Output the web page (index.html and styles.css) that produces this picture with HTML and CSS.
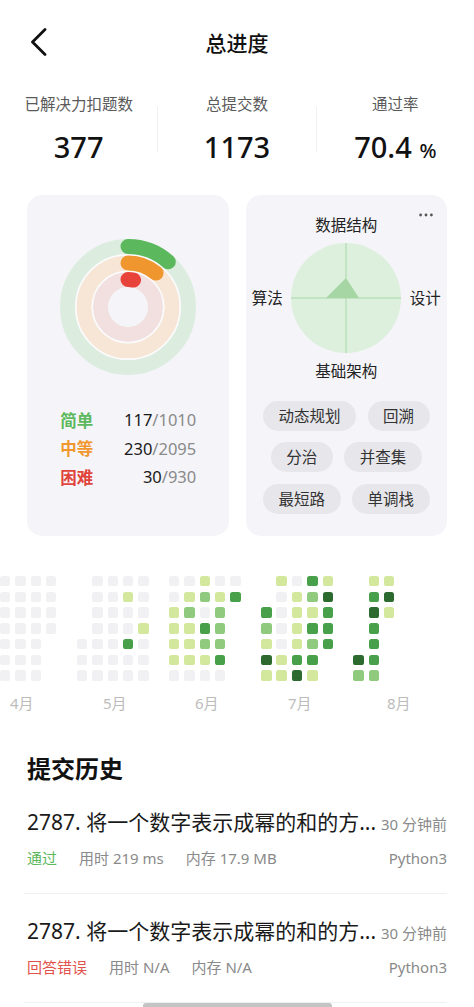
FILE: index.html
```html
<!DOCTYPE html>
<html lang="zh-CN">
<head>
<meta charset="utf-8">
<title>总进度</title>
<link rel="stylesheet" href="styles.css">
</head>
<body>
<div class="page">
  <header class="topbar">
    <div class="back">
      <svg width="20" height="28" viewBox="0 0 20 28"><path d="M16 1.5 L3.5 14 L16 26.5" fill="none" stroke="#111" stroke-width="2.8" stroke-linecap="round" stroke-linejoin="round"/></svg>
    </div>
    <h1 class="title">总进度</h1>
    <div></div>
  </header>

  <section class="stats">
    <div class="stat"><div class="stat-label">已解决力扣题数</div><div class="stat-value">377</div></div>
    <div class="vdiv"></div>
    <div class="stat"><div class="stat-label">总提交数</div><div class="stat-value">1173</div></div>
    <div class="vdiv"></div>
    <div class="stat"><div class="stat-label">通过率</div><div class="stat-value">70.4 <span class="pct">%</span></div></div>
  </section>

  <section class="cards">
    <div class="card card-rings">
      <svg class="rings" width="140" height="140" viewBox="0 0 140 140">
        <circle cx="70" cy="70" r="60.5" fill="none" stroke="#dcede0" stroke-width="15"/>
        <circle cx="70" cy="70" r="44" fill="none" stroke="#f7e6d6" stroke-width="15"/>
        <circle cx="70" cy="70" r="27.5" fill="none" stroke="#f2dfe0" stroke-width="15"/>
        <circle cx="70" cy="70" r="52.25" fill="none" stroke="#fbfbfc" stroke-width="1.5"/>
        <circle cx="70" cy="70" r="35.75" fill="none" stroke="#fbfbfc" stroke-width="1.5"/>
        <g transform="rotate(-90 70 70)">
          <circle cx="70" cy="70" r="60.5" fill="none" stroke="#5cb85c" stroke-width="15" stroke-linecap="round" stroke-dasharray="44 400"/>
          <circle cx="70" cy="70" r="44" fill="none" stroke="#f0962e" stroke-width="15" stroke-linecap="round" stroke-dasharray="30.4 400"/>
          <circle cx="70" cy="70" r="27.5" fill="none" stroke="#e8433a" stroke-width="15" stroke-linecap="round" stroke-dasharray="5.6 400"/>
        </g>
      </svg>
      <div class="legend">
        <span class="lv easy">简单</span><span class="cnt"><b>117</b>/1010</span>
        <span class="lv medium">中等</span><span class="cnt"><b>230</b>/2095</span>
        <span class="lv hard">困难</span><span class="cnt"><b>30</b>/930</span>
      </div>
    </div>

    <div class="card card-skills">
      <button class="more" aria-label="更多">
        <svg width="14" height="4" viewBox="0 0 14 4"><circle cx="1.6" cy="2" r="1.4" fill="#555"/><circle cx="7" cy="2" r="1.4" fill="#555"/><circle cx="12.4" cy="2" r="1.4" fill="#555"/></svg>
      </button>
      <div class="axis axis-top">数据结构</div>
      <div class="radar-row">
        <span class="axis">算法</span>
        <svg class="radar" width="110" height="110" viewBox="0 0 110 110">
          <circle cx="55" cy="55" r="55" fill="#ddf0dd"/>
          <line x1="55" y1="0" x2="55" y2="110" stroke="#a9d8a9" stroke-width="1"/>
          <line x1="0" y1="55" x2="110" y2="55" stroke="#a9d8a9" stroke-width="1"/>
          <polygon points="55,35 35,55 55,55 68,55" fill="#a6d6a3"/>
        </svg>
        <span class="axis">设计</span>
      </div>
      <div class="axis axis-bottom">基础架构</div>
      <div class="tags">
        <div class="tag-row"><span class="tag">动态规划</span><span class="tag">回溯</span></div>
        <div class="tag-row"><span class="tag">分治</span><span class="tag">并查集</span></div>
        <div class="tag-row"><span class="tag">最短路</span><span class="tag">单调栈</span></div>
      </div>
    </div>
  </section>

  <section class="heat">
    <div class="heat-grid">
      <!-- row 1 -->
      <i class="c0"></i><i class="c0"></i><i class="c0"></i><i class="c0"></i><i></i>
      <i></i><i class="c0"></i><i class="c0"></i><i class="c0"></i><i class="c0"></i><i></i>
      <i class="c0"></i><i class="c0"></i><i class="c1"></i><i class="c0"></i><i class="c0"></i><i></i>
      <i></i><i class="c1"></i><i class="c0"></i><i class="c3"></i><i class="c1"></i><i></i>
      <i></i><i class="c1"></i><i class="c1"></i>
      <!-- row 2 -->
      <i class="c0"></i><i class="c0"></i><i class="c0"></i><i class="c0"></i><i></i>
      <i></i><i class="c0"></i><i class="c0"></i><i class="c1"></i><i class="c0"></i><i></i>
      <i class="c0"></i><i class="c1"></i><i class="c2"></i><i class="c1"></i><i class="c3"></i><i></i>
      <i></i><i class="c0"></i><i class="c1"></i><i class="c2"></i><i class="c4"></i><i></i>
      <i></i><i class="c3"></i><i class="c4"></i>
      <!-- row 3 -->
      <i class="c0"></i><i class="c0"></i><i class="c0"></i><i class="c0"></i><i></i>
      <i></i><i class="c0"></i><i class="c0"></i><i class="c0"></i><i class="c0"></i><i></i>
      <i class="c1"></i><i class="c2"></i><i class="c0"></i><i class="c2"></i><i></i><i></i>
      <i class="c3"></i><i class="c0"></i><i class="c1"></i><i class="c1"></i><i class="c3"></i><i></i>
      <i></i><i class="c4"></i><i class="c1"></i>
      <!-- row 4 -->
      <i class="c0"></i><i class="c0"></i><i class="c0"></i><i class="c0"></i><i></i>
      <i></i><i class="c0"></i><i class="c0"></i><i class="c0"></i><i class="c1"></i><i></i>
      <i class="c1"></i><i class="c1"></i><i class="c3"></i><i class="c2"></i><i></i><i></i>
      <i class="c2"></i><i class="c0"></i><i class="c1"></i><i class="c3"></i><i class="c3"></i><i></i>
      <i></i><i class="c3"></i><i></i>
      <!-- row 5 -->
      <i class="c0"></i><i class="c0"></i><i class="c0"></i><i></i><i></i>
      <i class="c0"></i><i class="c0"></i><i class="c0"></i><i class="c3"></i><i class="c0"></i><i></i>
      <i class="c1"></i><i class="c1"></i><i class="c2"></i><i class="c2"></i><i></i><i></i>
      <i class="c1"></i><i class="c0"></i><i class="c1"></i><i class="c2"></i><i class="c3"></i><i></i>
      <i></i><i class="c3"></i><i></i>
      <!-- row 6 -->
      <i class="c0"></i><i class="c0"></i><i class="c0"></i><i></i><i></i>
      <i class="c0"></i><i class="c0"></i><i class="c0"></i><i class="c0"></i><i class="c0"></i><i></i>
      <i class="c1"></i><i class="c1"></i><i class="c1"></i><i class="c3"></i><i></i><i></i>
      <i class="c4"></i><i class="c1"></i><i class="c3"></i><i class="c3"></i><i></i><i></i>
      <i class="c4"></i><i class="c3"></i><i></i>
      <!-- row 7 -->
      <i class="c0"></i><i class="c0"></i><i class="c0"></i><i></i><i></i>
      <i class="c0"></i><i class="c0"></i><i class="c0"></i><i class="c0"></i><i class="c0"></i><i></i>
      <i class="c0"></i><i class="c0"></i><i class="c0"></i><i class="c0"></i><i></i><i></i>
      <i class="c1"></i><i class="c1"></i><i class="c4"></i><i class="c1"></i><i></i><i></i>
      <i class="c2"></i><i class="c2"></i><i></i>
    </div>
    <div class="months">
      <span>4月</span><span>5月</span><span>6月</span><span>7月</span><span>8月</span>
    </div>
  </section>

  <section class="history">
    <h2 class="history-title">提交历史</h2>
    <div class="sub">
      <div class="sub-head">
        <span class="sub-name">2787. 将一个数字表示成幂的和的方...</span>
        <span class="sub-time">30 分钟前</span>
      </div>
      <div class="sub-meta">
        <span class="status ok">通过</span>
        <span>用时 219 ms</span>
        <span>内存 17.9 MB</span>
        <span class="lang">Python3</span>
      </div>
    </div>
    <div class="sub">
      <div class="sub-head">
        <span class="sub-name">2787. 将一个数字表示成幂的和的方...</span>
        <span class="sub-time">30 分钟前</span>
      </div>
      <div class="sub-meta">
        <span class="status wa">回答错误</span>
        <span>用时 N/A</span>
        <span>内存 N/A</span>
        <span class="lang">Python3</span>
      </div>
    </div>
  </section>

  <div class="home-bar"></div>
</div>
</body>
</html>
```

FILE: styles.css
```css
* { box-sizing: border-box; }

html, body {
  margin: 0;
  padding: 0;
  background: #ffffff;
}

body {
  font-family: "Noto Sans", "Noto Sans CJK SC", sans-serif;
  color: #111;
  width: 474px;
  overflow-x: hidden;
}

.page {
  width: 474px;
}

/* header */
.topbar {
  height: 86px;
  display: grid;
  grid-template-columns: 1fr auto 1fr;
  align-items: center;
}

.back {
  padding-left: 29px;
  display: flex;
  align-items: center;
  margin-top: -2px;
}

.title {
  margin: 0;
  font-size: 21px;
  font-weight: 500;
  line-height: 30px;
  color: #111;
}

/* stats */
.stats {
  margin-top: 7px;
  display: grid;
  grid-template-columns: 1fr 1px 1fr 1px 1fr;
  align-items: center;
}

.stat {
  text-align: center;
}

.stat-label {
  font-size: 15.5px;
  line-height: 22px;
  color: #5a5a5a;
}

.stat-value {
  margin-top: 14px;
  height: 36px;
  font-size: 29px;
  line-height: 36px;
  font-weight: 500;
  color: #111;
}

.pct {
  font-size: 20px;
  line-height: 20px;
}

.vdiv {
  height: 46px;
  background: #f1f1f3;
}

/* cards */
.cards {
  margin-top: 30px;
  padding: 0 27px;
  display: flex;
  gap: 17px;
}

.card {
  flex: 1;
  height: 341px;
  background: #f5f5f9;
  border-radius: 15px;
}

.card-rings {
  padding-top: 42px;
  display: flex;
  flex-direction: column;
  align-items: center;
}

.rings {
  display: block;
}

.legend {
  margin-top: 28.5px;
  width: 136px;
  margin-left: 1px;
  display: grid;
  grid-template-columns: auto 1fr;
  grid-auto-rows: 28.6px;
  align-items: center;
}

.lv {
  font-size: 16.5px;
  font-weight: 600;
}

.easy { color: #5cb85c; }
.medium { color: #f0982f; }
.hard { color: #e0443c; }

.cnt {
  text-align: right;
  font-size: 16.5px;
  color: #8a8a8a;
}

.cnt b {
  font-weight: 400;
  color: #1a1a1a;
}

.card-skills {
  position: relative;
  padding-top: 20px;
  display: flex;
  flex-direction: column;
  align-items: center;
}

.more {
  position: absolute;
  top: 14px;
  right: 12px;
  width: 18px;
  height: 12px;
  padding: 0;
  border: 0;
  background: transparent;
  display: flex;
  align-items: center;
  justify-content: center;
}

.axis {
  font-size: 15.5px;
  line-height: 20px;
  color: #222;
}

.radar-row {
  margin-top: 7.5px;
  display: flex;
  align-items: center;
  gap: 8.5px;
}

.radar {
  display: block;
}

.axis-bottom {
  margin-top: 8.5px;
}

.tags {
  margin-top: 19.5px;
  display: flex;
  flex-direction: column;
  gap: 11.5px;
  align-items: center;
}

.tag-row {
  display: flex;
  gap: 11.5px;
}

.tag {
  height: 30px;
  line-height: 30px;
  padding: 0 15.5px;
  border-radius: 15px;
  background: #e7e7eb;
  font-size: 15.5px;
  color: #333;
}

/* heatmap */
.heat {
  margin-top: 40px;
}

.heat-grid {
  display: grid;
  grid-template-columns: repeat(26, 10.4px);
  grid-auto-rows: 10.4px;
  column-gap: 4.97px;
  row-gap: 5.35px;
  padding-left: 0;
}

.heat-grid i {
  display: block;
  border-radius: 2.6px;
}

.heat-grid .c0 { background: #f1f1f3; }
.heat-grid .c1 { background: #d3e79d; }
.heat-grid .c2 { background: #8fca7f; }
.heat-grid .c3 { background: #49a04a; }
.heat-grid .c4 { background: #2c6a2f; }

.months {
  margin-top: 12px;
  padding-left: 10px;
  display: grid;
  grid-template-columns: 93px 92px 93px 99px auto;
  font-size: 15px;
  line-height: 20px;
  color: #bcbcbc;
}

/* history */
.history {
  margin-top: 40px;
}

.history-title {
  margin: 0;
  padding-left: 27px;
  font-size: 24px;
  line-height: 32px;
  font-weight: 700;
  color: #111;
}

.sub {
  margin: 0 27px 0 24px;
  padding: 23px 0 24px 3px;
  border-bottom: 1px solid #f0f0f2;
}

.sub-head {
  display: flex;
  align-items: baseline;
  justify-content: space-between;
  line-height: 28px;
}

.sub-name {
  font-size: 21px;
  color: #1a1a1a;
  white-space: nowrap;
  overflow: hidden;
  min-width: 0;
}

.sub-time {
  flex: none;
  font-size: 15px;
  color: #8a8a8a;
  margin-left: 4px;
}

.sub-meta {
  margin-top: 9px;
  display: flex;
  gap: 22px;
  font-size: 15px;
  line-height: 22px;
  color: #8a8a8a;
}

.status.ok { color: #5cb85c; }
.status.wa { color: #e0524a; }

.lang {
  margin-left: auto;
}

.home-bar {
  position: fixed;
  left: 143px;
  bottom: -3px;
  width: 189px;
  height: 7px;
  border-radius: 3px;
  background: #c4c4c4;
}
```
